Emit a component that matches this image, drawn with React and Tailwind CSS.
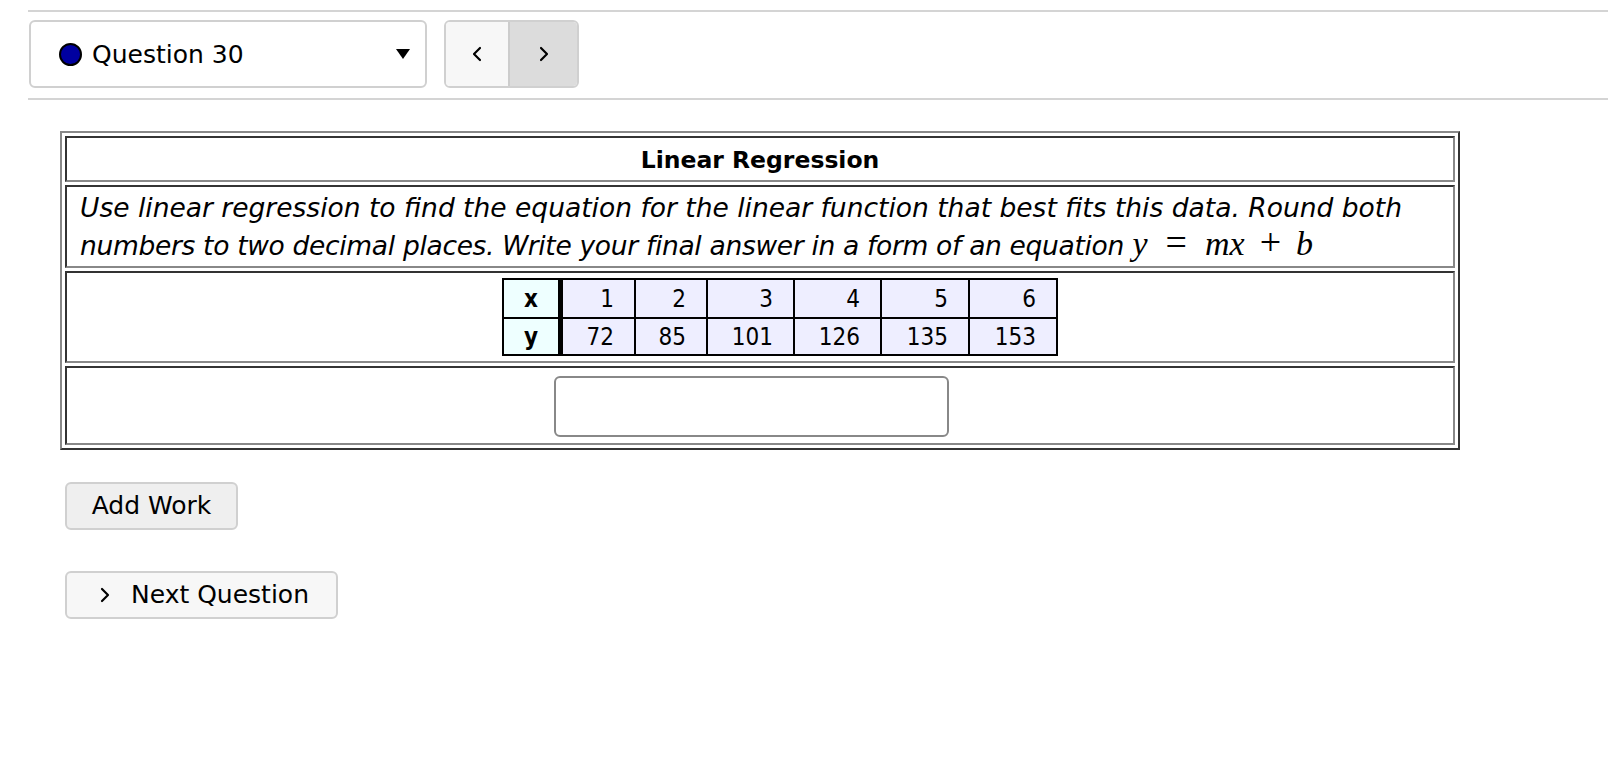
import React from 'react';

const dataX = [1, 2, 3, 4, 5, 6];
const dataY = [72, 85, 101, 126, 135, 153];
const colW = ['w-[73px]', 'w-[72px]', 'w-[87px]', 'w-[87px]', 'w-[88px]', 'w-[86px]'];

function Chevron({ dir = 'right', className = '' }) {
    return (
        <svg viewBox="0 0 10 16" className={className} fill="none" stroke="currentColor" strokeWidth="2.2" strokeLinecap="round" strokeLinejoin="round">
            {dir === 'right' ? <polyline points="2,2 8,8 2,14" /> : <polyline points="8,2 2,8 8,14" />}
        </svg>
    );
}

function DataRow({ label, values, top }) {
    return (
        <div className={`flex h-[37px] ${top ? '' : 'border-t-2 border-black'}`}>
            <div className="w-[59px] border-r-[5px] border-black bg-[#eeffff] flex items-center justify-center font-bold">{label}</div>
            {values.map((v, i) => (
                <div key={i} className={`${colW[i]} ${i < values.length - 1 ? 'border-r-2 border-black' : ''} bg-[#eeeeff] flex items-center justify-end pr-[20px]`}>
                    {v}
                </div>
            ))}
        </div>
    );
}

export default function App() {
    return (
        <div className="min-h-screen bg-white text-black text-[25px] font-['DejaVu_Sans',sans-serif]">
            {/* question picker */}
            <div className="pl-[28px] pt-[10px]">
                <div className="border-t-2 border-[#d4d4d4]" />
                <div className="mt-[8px] flex gap-[17px] pl-px h-[68px]">
                    <div className="w-[398px] h-full border-2 border-[#d0d0d0] rounded-[6px] flex items-center pl-[28px] pr-[15px]">
                        <span className="w-[23px] h-[23px] rounded-full bg-[#0000a0] border-2 border-black" />
                        <span className="ml-[10px] flex-1 pt-[2px]">Question 30</span>
                        <svg viewBox="0 0 14 10" className="w-[14px] h-[10px]"><polygon points="0,0 14,0 7,10" fill="black" /></svg>
                    </div>
                    <div className="w-[135px] h-full border-2 border-[#d0d0d0] rounded-[6px] flex overflow-hidden">
                        <div className="w-[64px] bg-[#f7f7f7] border-r-2 border-[#cccccc] flex items-center justify-center">
                            <Chevron dir="left" className="w-[10px] h-[16px]" />
                        </div>
                        <div className="flex-1 bg-[#dcdcdc] flex items-center justify-center">
                            <Chevron dir="right" className="w-[10px] h-[16px]" />
                        </div>
                    </div>
                </div>
                <div className="mt-[10px] border-t-2 border-[#d4d4d4]" />
            </div>

            {/* question table */}
            <div className="ml-[60px] mt-[31px] w-[1400px] border-2 border-t-[#888888] border-l-[#888888] border-r-[#333333] border-b-[#333333] p-[3px] flex flex-col gap-[3px]">
                <div className="h-[46px] border-2 border-t-[#333333] border-l-[#333333] border-r-[#888888] border-b-[#888888] flex items-center justify-center pt-[3px] font-bold text-[23.5px]">
                    Linear Regression
                </div>
                <div className="h-[83px] border-2 border-t-[#333333] border-l-[#333333] border-r-[#888888] border-b-[#888888] flex flex-col justify-center pl-[13px] italic text-[26.5px] leading-[34px]">
                    <span>Use linear regression to find the equation for the linear function that best fits this data. Round both</span>
                    <span className="whitespace-nowrap">
                        <span className="tracking-[-0.32px]">numbers to two decimal places. Write your final answer in a form of an equation</span>{' '}
                        <span className="not-italic font-['Liberation_Serif',serif] text-[34px] leading-[34px]">
                            <i>y</i>
                            <span className="mx-[18px] text-[38px]">=</span>
                            <i>mx</i>
                            <span className="mx-[15px] text-[38px]">+</span>
                            <i>b</i>
                        </span>
                    </span>
                </div>
                <div className="h-[92px] border-2 border-t-[#333333] border-l-[#333333] border-r-[#888888] border-b-[#888888] pt-[5px] pl-[435px] text-[24px] font-['DejaVu_Sans_Condensed','DejaVu_Sans',sans-serif]">
                    <div className="w-[556px] border-2 border-black">
                        <DataRow label="x" values={dataX} top />
                        <DataRow label="y" values={dataY} />
                    </div>
                </div>
                <div className="h-[79px] border-2 border-t-[#333333] border-l-[#333333] border-r-[#888888] border-b-[#888888] pt-[8px] pl-[487px]">
                    <input type="text" className="w-[395px] h-[61px] border-2 border-[#888888] rounded-[6px] outline-none px-2" />
                </div>
            </div>

            {/* actions */}
            <div className="ml-[65px] mt-[32px] flex flex-col items-start">
                <button className="w-[173px] h-[48px] bg-[#efefef] border-2 border-[#d0d0d0] rounded-[6px] flex items-center justify-center">
                    Add Work
                </button>
                <button className="mt-[41px] w-[273px] h-[48px] bg-[#f7f7f7] border-2 border-[#d0d0d0] rounded-[6px] flex items-center pl-[33px]">
                    <Chevron dir="right" className="w-[10px] h-[16px]" />
                    <span className="ml-[21px]">Next Question</span>
                </button>
            </div>
        </div>
    );
}
